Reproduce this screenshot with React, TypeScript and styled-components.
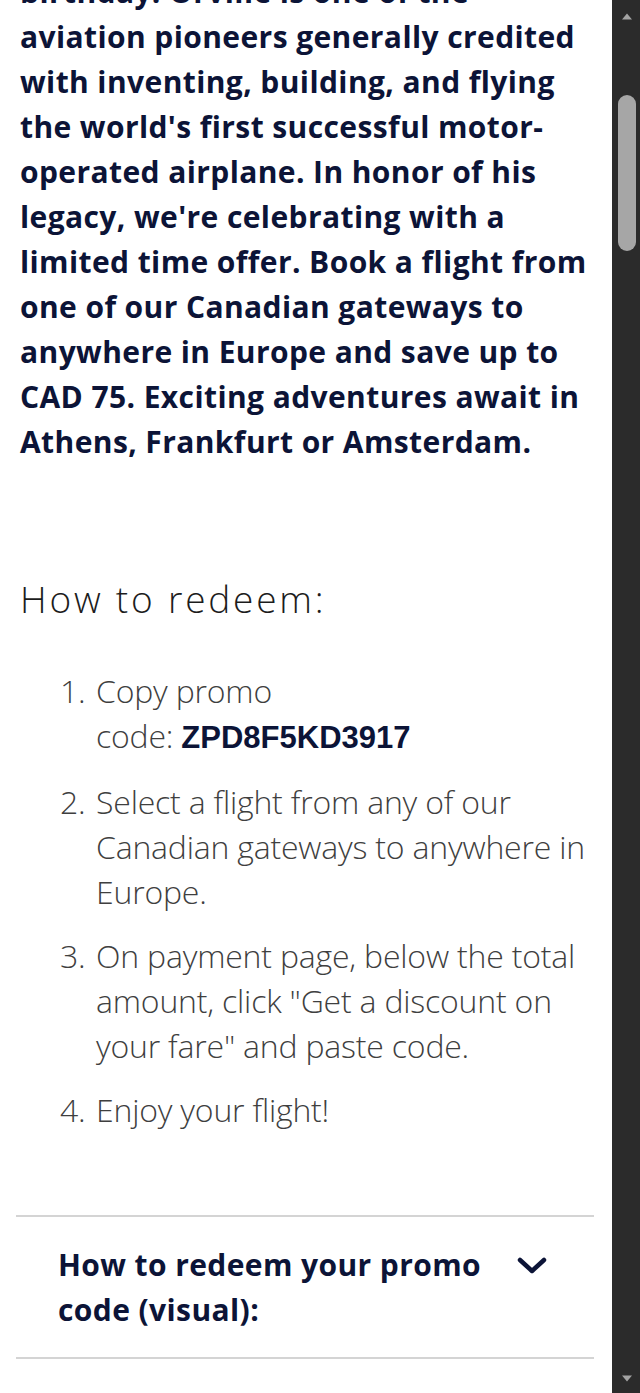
import React from "react";
import styled, { createGlobalStyle } from "styled-components";

const GlobalStyle = createGlobalStyle`
	html, body {
		margin: 0;
		padding: 0;
		background: #ffffff;
		overflow: hidden;
	}
	* {
		box-sizing: border-box;
	}
`;

// lines are broken as in the narrow mobile view
const introLines = [
	"birthday. Orville is one of the",
	"aviation pioneers generally credited",
	"with inventing, building, and flying",
	"the world's first successful motor-",
	"operated airplane. In honor of his",
	"legacy, we're celebrating with a",
	"limited time offer. Book a flight from",
	"one of our Canadian gateways to",
	"anywhere in Europe and save up to",
	"CAD 75. Exciting adventures await in",
	"Athens, Frankfurt or Amsterdam.",
];

const App = () => {
	const steps: { id: number; lines: React.ReactNode[] }[] = [
		{
			id: 1,
			lines: [
				"Copy promo",
				<>
					code: <Code>ZPD8F5KD3917</Code>
				</>,
			],
		},
		{ id: 2, lines: ["Select a flight from any of our", "Canadian gateways to anywhere in", "Europe."] },
		{ id: 3, lines: ["On payment page, below the total", 'amount, click "Get a discount on', 'your fare" and paste code.'] },
		{ id: 4, lines: ["Enjoy your flight!"] },
	];

	return (
		<>
			<GlobalStyle />
			<Page>
				<Content>
					<Intro>
						{introLines.map((l, i) => (
							<Line key={i}>{l}</Line>
						))}
					</Intro>

					<Heading>How to redeem:</Heading>

					<Steps>
						{steps.map((s) => (
							<Step key={s.id}>
								<StepNum>{s.id}.</StepNum>
								<StepText>
									{s.lines.map((l, i) => (
										<Line key={i}>{l}</Line>
									))}
								</StepText>
							</Step>
						))}
					</Steps>

					<Accordion>
						<AccordionTitle>
							<Line>How to redeem your promo</Line>
							<Line>code (visual):</Line>
						</AccordionTitle>
						<Chevron viewBox="0 0 30 18" aria-hidden="true">
							<polyline points="3,3 15,14 27,3" />
						</Chevron>
					</Accordion>
				</Content>

				<ScrollTrack>
					<Arrow viewBox="0 0 12 8">
						<polygon points="6,1 11,7 1,7" />
					</Arrow>
					<Thumb />
					<TrackSpace />
					<Arrow viewBox="0 0 12 8">
						<polygon points="1,1 11,1 6,7" />
					</Arrow>
				</ScrollTrack>
			</Page>
		</>
	);
};

export default App;

const Page = styled.div`
	width: 640px;
	height: 1393px;
	display: flex;
	overflow: hidden;
`;

const Content = styled.div`
	flex: 1;
	display: flex;
	flex-direction: column;
	padding: 0 18px 0 20px;
	overflow: hidden;
	background: #ffffff;
`;

const Line = styled.span`
	display: block;
	white-space: nowrap;
`;

const Intro = styled.p`
	margin: -31px -14px 0 0;
	font-family: "Open Sans", "Liberation Sans", sans-serif;
	font-weight: 700;
	font-size: 30px;
	line-height: 45px;
	letter-spacing: 0.4px;
	color: #0c1437;
`;

const Heading = styled.h2`
	margin: 113px 0 0 0;
	font-family: "Open Sans", sans-serif;
	font-weight: 300;
	font-size: 37px;
	line-height: 44px;
	letter-spacing: 2.8px;
	color: #1c1c1c;
`;

const Steps = styled.ol`
	list-style: none;
	margin: 47px -14px 0 0;
	padding: 0 0 0 40px;
	display: flex;
	flex-direction: column;
	gap: 19px;
`;

const Step = styled.li`
	display: flex;
	font-family: "Open Sans", sans-serif;
	font-weight: 300;
	font-size: 32px;
	line-height: 45px;
	letter-spacing: -0.2px;
	color: #3f3f3f;
`;

const StepNum = styled.span`
	width: 36px;
	flex-shrink: 0;
`;

const StepText = styled.span`
	flex: 1;
`;

const Code = styled.strong`
	font-family: "Liberation Sans", Arial, sans-serif;
	font-weight: 700;
	font-size: 31px;
	letter-spacing: 0;
	color: #0c1437;
`;

const Accordion = styled.div`
	margin: 83px 0 0 -4px;
	border-top: 2px solid #d4d4d4;
	border-bottom: 2px solid #d4d4d4;
	padding: 25px 47px 25px 42px;
	display: flex;
	align-items: flex-start;
	justify-content: space-between;
	gap: 20px;
`;

const AccordionTitle = styled.div`
	font-family: "Open Sans", "Liberation Sans", sans-serif;
	font-weight: 700;
	font-size: 30px;
	line-height: 45px;
	letter-spacing: 0.4px;
	color: #0c1437;
`;

const Chevron = styled.svg`
	width: 30px;
	height: 18px;
	margin-top: 15px;
	flex-shrink: 0;
	fill: none;
	stroke: #0c1437;
	stroke-width: 4.5;
	stroke-linecap: round;
	stroke-linejoin: round;
`;

const ScrollTrack = styled.div`
	width: 28px;
	flex-shrink: 0;
	background: #2b2b2b;
	display: flex;
	flex-direction: column;
	align-items: center;
	padding: 12px 0 10px 2px;
`;

const Arrow = styled.svg`
	width: 12px;
	height: 9px;
	fill: #a3a3a3;
	flex-shrink: 0;
`;

const Thumb = styled.div`
	margin-top: 74px;
	width: 18px;
	height: 156px;
	border-radius: 9px;
	background: #a6a6a6;
	flex-shrink: 0;
`;

const TrackSpace = styled.div`
	flex: 1;
`;
